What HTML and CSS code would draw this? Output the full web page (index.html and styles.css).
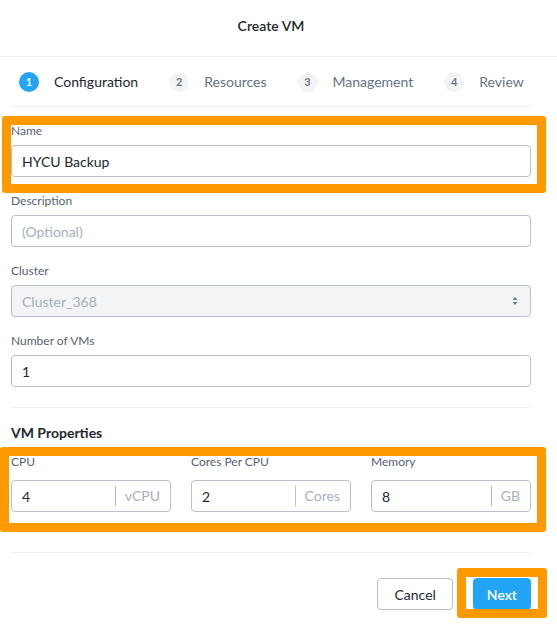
FILE: index.html
```html
<!DOCTYPE html>
<html lang="en">
<head>
<meta charset="utf-8">
<title>Create VM</title>
<link rel="stylesheet" href="styles.css">
</head>
<body>
  <header class="header">
    <h1 class="title">Create VM</h1>
  </header>
  <main class="content">
    <ol class="steps">
      <li class="step step-active"><span class="step-num">1</span><span class="step-label">Configuration</span></li>
      <li class="step"><span class="step-num">2</span><span class="step-label">Resources</span></li>
      <li class="step"><span class="step-num">3</span><span class="step-label">Management</span></li>
      <li class="step"><span class="step-num">4</span><span class="step-label">Review</span></li>
    </ol>
    <div class="form">
      <div class="field">
        <div class="label">Name</div>
        <div class="input">HYCU Backup</div>
      </div>
      <div class="field">
        <div class="label">Description</div>
        <div class="input placeholder">(Optional)</div>
      </div>
      <div class="field">
        <div class="label">Cluster</div>
        <div class="input select">
          <span>Cluster_368</span>
          <svg class="select-arrows" width="6" height="10" viewBox="0 0 6 10"><path d="M3 1 L5.5 4 L0.5 4 Z M3 9 L0.5 6 L5.5 6 Z" fill="#6b7785"/></svg>
        </div>
      </div>
      <div class="field field-last">
        <div class="label">Number of VMs</div>
        <div class="input">1</div>
      </div>
      <div class="divider divider-top"></div>
      <h2 class="section">VM Properties</h2>
      <div class="props">
        <div class="prop">
          <div class="label label-prop">CPU</div>
          <div class="input addon-input"><span class="addon-value">4</span><span class="addon">vCPU</span></div>
        </div>
        <div class="prop">
          <div class="label label-prop">Cores Per CPU</div>
          <div class="input addon-input"><span class="addon-value">2</span><span class="addon">Cores</span></div>
        </div>
        <div class="prop">
          <div class="label label-prop">Memory</div>
          <div class="input addon-input"><span class="addon-value">8</span><span class="addon">GB</span></div>
        </div>
      </div>
      <div class="divider divider-bottom"></div>
      <div class="actions">
        <button class="btn btn-cancel" type="button">Cancel</button>
        <button class="btn btn-next" type="button">Next</button>
      </div>
    </div>
  </main>
  <div class="highlight hl-name"></div>
  <div class="highlight hl-props"></div>
  <div class="highlight hl-next"></div>
</body>
</html>
```

FILE: styles.css
```css
* { box-sizing: border-box; }

html, body {
  margin: 0;
  padding: 0;
  background: #ffffff;
}

body {
  position: relative;
  width: 557px;
  min-height: 630px;
  font-family: "Lato", "Liberation Sans", sans-serif;
  color: #22272e;
}

.header {
  height: 57px;
  border-bottom: 1px solid #eef0f2;
  padding: 17px 15px 0 0;
}

.title {
  margin: 0;
  text-align: center;
  font-size: 14px;
  line-height: 18px;
  font-weight: 600;
  color: #22272e;
}

.content {
  width: 520px;
  margin-left: 11px;
}

.steps {
  list-style: none;
  margin: 0;
  padding: 0 0 0 8px;
  height: 50px;
  border-bottom: 1px solid #eef0f2;
  display: flex;
  align-items: center;
  gap: 31px;
}

.step {
  display: flex;
  align-items: center;
  gap: 15px;
}

.step-num {
  width: 20px;
  height: 20px;
  border-radius: 50%;
  background: #f2f4f6;
  color: #6b7785;
  font-size: 11px;
  font-weight: 700;
  display: flex;
  align-items: center;
  justify-content: center;
}

.step-label {
  font-size: 14px;
  line-height: 18px;
  color: #627386;
}

.step-active .step-num {
  background: #22a5f7;
  color: #ffffff;
}

.step-active .step-label {
  color: #22272e;
}

.form {
  padding-top: 17px;
  display: flex;
  flex-direction: column;
}

.field {
  margin-bottom: 17px;
}

.label {
  font-size: 12px;
  line-height: 14px;
  color: #56636f;
  margin-bottom: 7px;
}

.label-prop {
  margin-bottom: 11px;
}

.input {
  height: 32px;
  border: 1px solid #b8bfca;
  border-radius: 4px;
  padding: 0 10px;
  display: flex;
  align-items: center;
  font-size: 14px;
  color: #22272e;
  background: #ffffff;
}

.placeholder {
  color: #a7b0bc;
}

.select {
  background: #f2f4f6;
  color: #a7b0bc;
  justify-content: space-between;
  padding-right: 12px;
}

.select-arrows {
  display: block;
}

.divider {
  height: 1px;
  background: #eef0f2;
}

.divider-top {
  margin-top: 3px;
}

.section {
  margin: 16px 0 13px;
  font-size: 14px;
  line-height: 18px;
  font-weight: 700;
  color: #22272e;
}

.props {
  display: grid;
  grid-template-columns: repeat(3, 1fr);
  gap: 20px;
}

.addon-input {
  padding-right: 0;
}

.addon-value {
  flex: 1;
}

.addon {
  height: 20px;
  line-height: 20px;
  border-left: 1px solid #b8bfca;
  padding: 0 10px 0 9px;
  color: #a7b0bc;
}

.divider-bottom {
  margin-top: 40px;
}

.actions {
  margin-top: 25px;
  display: flex;
  justify-content: flex-end;
  gap: 20px;
}

.btn {
  height: 32px;
  border-radius: 4px;
  font-family: inherit;
  font-size: 14px;
  cursor: pointer;
}

.btn-cancel {
  background: #ffffff;
  border: 1px solid #b8bfca;
  color: #22272e;
  padding: 0 16px;
}

.btn-next {
  background: #22a5f7;
  border: 1px solid #22a5f7;
  color: #ffffff;
  font-weight: 600;
  padding: 0 13px;
}

.highlight {
  position: absolute;
  border: 9px solid #ff9900;
  border-radius: 3px;
  pointer-events: none;
}

.hl-name {
  left: 2px;
  top: 116px;
  width: 544px;
  height: 77px;
}

.hl-props {
  left: 0;
  top: 447px;
  width: 546px;
  height: 85px;
}

.hl-next {
  left: 457px;
  top: 568px;
  width: 90px;
  height: 50px;
}
```
